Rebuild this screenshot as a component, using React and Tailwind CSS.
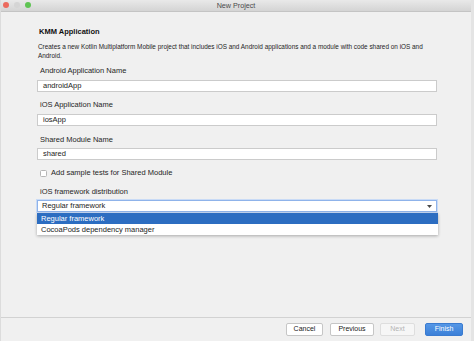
import React from "react";

const font = { fontFamily: '"Liberation Sans", Arial, sans-serif' };

function Label({ children, className = "" }) {
  return (
    <div className={"pl-[3px] h-[10px] leading-[10px] text-[7.5px] text-[#262626] whitespace-nowrap " + className}>
      {children}
    </div>
  );
}

function Input({ value, className = "" }) {
  return (
    <div className={"h-[12px] bg-white border border-[#cbcbcb] pl-[5px] flex items-center text-[7.5px] text-[#1c1c1c] " + className}>
      {value}
    </div>
  );
}

export default function App() {
  return (
    <div className="w-[474px] h-[341px] bg-[#e4e4e4] flex overflow-hidden" style={font}>
      <div className="w-[471px] h-[341px] bg-[#f0f0f0] flex flex-col border-l border-[#dcdcdc]">
        {/* title bar */}
        <div className="relative h-[12px] bg-gradient-to-b from-[#e9e9e9] to-[#d4d4d4] border-b border-[#c4c4c4] flex items-center justify-center">
          <div className="absolute left-[2px] top-[2px] flex gap-[4px]">
            <div className="w-[6px] h-[6px] rounded-full bg-[#ec6a5e]" />
            <div className="w-[6px] h-[6px] rounded-full bg-[#d5d5d5] mx-[1px]" />
            <div className="w-[6px] h-[6px] rounded-full bg-[#5fc453]" />
          </div>
          <span className="text-[7.2px] text-[#4a4a4a] leading-none">New Project</span>
        </div>

        {/* content */}
        <div className="flex-1 flex flex-col ml-[36px] w-[400px]">
          <div className="mt-[15px] pl-[2px] h-[10px] leading-[10px] text-[7.5px] font-bold text-[#111]">
            KMM Application
          </div>
          <div className="mt-[5px] pl-[1px] text-[6.4px] leading-[9px] text-[#1e1e1e] whitespace-nowrap">
            Creates a new Kotlin Multiplatform Mobile project that includes iOS and Android applications and a module with code shared on iOS and
            <br />
            Android.
          </div>

          <Label className="mt-[6px]">Android Application Name</Label>
          <Input className="mt-[4px]" value="androidApp" />

          <Label className="mt-[8px]">iOS Application Name</Label>
          <Input className="mt-[4px]" value="iosApp" />

          <Label className="mt-[9px]">Shared Module Name</Label>
          <Input className="mt-[3px]" value="shared" />

          <div className="mt-[8px] h-[10px] flex items-center pl-[3px]">
            <div className="w-[7px] h-[7px] bg-white border border-[#b5b5b5] rounded-[1.5px]" />
            <span className="ml-[4px] text-[7.5px] text-[#262626] whitespace-nowrap">Add sample tests for Shared Module</span>
          </div>

          <Label className="mt-[9px]">iOS framework distribution</Label>
          <div className="relative mt-[3px]">
            <div className="h-[12px] bg-white border border-[#8fb3ea] shadow-[0_0_0_1px_#c9dbf6] pl-[4px] pr-[4px] flex items-center justify-between text-[7.5px] text-[#1c1c1c]">
              <span>Regular framework</span>
              <svg width="5" height="3" viewBox="0 0 5 3">
                <path d="M0 0 L5 0 L2.5 3 Z" fill="#4a4a4a" />
              </svg>
            </div>
            <div className="absolute left-0 top-[13px] w-[401px] bg-white shadow-[0_1px_3px_rgba(0,0,0,0.3)] text-[7.5px]">
              <div className="h-[11px] bg-[#2c6dc1] text-white pl-[4px] flex items-center">Regular framework</div>
              <div className="h-[11px] text-[#1c1c1c] pl-[4px] flex items-center">CocoaPods dependency manager</div>
            </div>
          </div>
        </div>

        {/* footer */}
        <div className="h-[24px] border-t border-[#d2d2d2] flex items-start justify-end pt-[5px] pr-[8px] text-[7px]">
          <div className="w-[37px] h-[13px] bg-white border border-[#c6c6c6] rounded-[2px] flex items-center justify-center text-[#222]">Cancel</div>
          <div className="ml-[7px] w-[44px] h-[13px] bg-white border border-[#c6c6c6] rounded-[2px] flex items-center justify-center text-[#222]">Previous</div>
          <div className="ml-[6px] w-[35px] h-[13px] bg-[#f6f6f6] border border-[#dedede] rounded-[2px] flex items-center justify-center text-[#b4b4b4]">Next</div>
          <div className="ml-[10px] w-[38px] h-[13px] bg-gradient-to-b from-[#5597e6] to-[#3b80d8] border border-[#3a7bd0] rounded-[2px] flex items-center justify-center text-white">Finish</div>
        </div>
      </div>
    </div>
  );
}
